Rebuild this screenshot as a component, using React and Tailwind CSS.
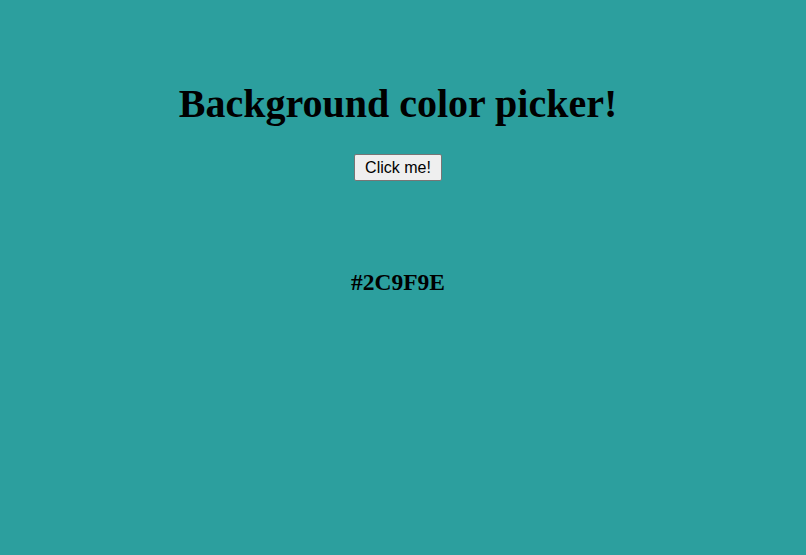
export default function App() {
  return (
    <div className="min-h-[555px] w-full bg-[#2C9F9E] pr-[10px] text-center text-black" style={{ fontFamily: '"Liberation Serif", serif' }}>
      <h1 className="pt-[80px] text-[40px] font-bold leading-[48px]">Background color picker!</h1>
      <button
        className="mt-[26px] rounded-[2px] border border-[#767676] bg-[#efefef] px-[10px] py-[1px] text-[16px] leading-[23px]"
        style={{ fontFamily: '"Liberation Sans", sans-serif' }}
      >
        Click me!
      </button>
      <h3 className="mt-[87px] text-[23.5px] font-bold leading-[28px]">#2C9F9E</h3>
    </div>
  );
}
